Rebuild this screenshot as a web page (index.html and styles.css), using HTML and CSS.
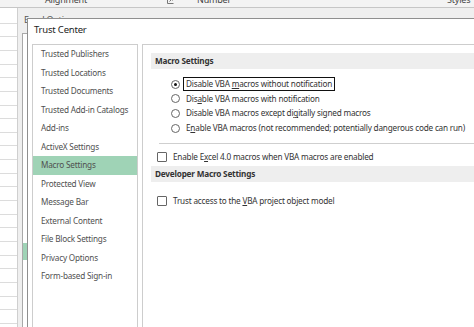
FILE: index.html
```html
<!DOCTYPE html>
<html lang="en">
<head>
    <meta charset="UTF-8">
    <meta name="viewport" content="width=device-width, initial-scale=1.0">
    <title>Trust Center - Macro Settings</title>
    <link rel="icon" href="data:,">
    <link rel="stylesheet" href="styles.css">
</head>
<body>
    <div class="ribbon">
        <span class="group-label label-alignment">Alignment</span>
        <svg class="launcher" width="7" height="7" viewBox="0 0 7 7">
            <path d="M0.5 0.5v6h6" fill="none" stroke="#777" stroke-width="1"/>
            <path d="M2.5 4.5l3-3M3.5 1.5h2v2" fill="none" stroke="#777" stroke-width="1"/>
        </svg>
        <span class="group-label label-number">Number</span>
        <span class="group-label label-styles">Styles</span>
    </div>

    <div class="workspace">
        <!-- Excel Options window, mostly hidden behind Trust Center -->
        <div class="options-window">
            <div class="options-title">Excel Options</div>
            <div class="options-nav">
                <div class="options-selected"></div>
            </div>
        </div>

        <!-- Trust Center window -->
        <div class="trust-window">
            <div class="trust-title">Trust Center</div>
            <div class="trust-body">
                <div class="trust-nav">
                    <div class="nav-item">Trusted Publishers</div>
                    <div class="nav-item">Trusted Locations</div>
                    <div class="nav-item">Trusted Documents</div>
                    <div class="nav-item">Trusted Add-in Catalogs</div>
                    <div class="nav-item">Add-ins</div>
                    <div class="nav-item">ActiveX Settings</div>
                    <div class="nav-item selected">Macro Settings</div>
                    <div class="nav-item">Protected View</div>
                    <div class="nav-item">Message Bar</div>
                    <div class="nav-item">External Content</div>
                    <div class="nav-item">File Block Settings</div>
                    <div class="nav-item">Privacy Options</div>
                    <div class="nav-item">Form-based Sign-in</div>
                </div>

                <div class="trust-panel">
                    <div class="section-header">Macro Settings</div>
                    <div class="radio-list">
                        <div class="option-row">
                            <span class="radio checked"></span>
                            <span class="option-label focused">Disable VBA <u>m</u>acros without notification</span>
                        </div>
                        <div class="option-row">
                            <span class="radio"></span>
                            <span class="option-label">Dis<u>a</u>ble VBA macros with notification</span>
                        </div>
                        <div class="option-row">
                            <span class="radio"></span>
                            <span class="option-label">Disable VBA macros except di<u>g</u>itally signed macros</span>
                        </div>
                        <div class="option-row">
                            <span class="radio"></span>
                            <span class="option-label">E<u>n</u>able VBA macros (not recommended; potentially dangerous code can run)</span>
                        </div>
                    </div>
                    <div class="separator"></div>
                    <div class="option-row check-row">
                        <span class="checkbox"></span>
                        <span class="option-label">Enable E<u>x</u>cel 4.0 macros when VBA macros are enabled</span>
                    </div>
                    <div class="section-header header-dev">Developer Macro Settings</div>
                    <div class="option-row check-row check-dev">
                        <span class="checkbox"></span>
                        <span class="option-label">Trust access to the <u>V</u>BA project object model</span>
                    </div>
                </div>
            </div>
        </div>
    </div>
</body>
</html>
```

FILE: styles.css
```css
body {
    margin: 0;
    width: 474px;
    height: 327px;
    overflow: hidden;
    font-family: "Noto Sans", "Open Sans", sans-serif;
    font-size: 8.2px;
    letter-spacing: -0.2px;
    color: #333;
    background: #fff;
}
.ribbon {
    height: 7px;
    overflow: hidden;
    background: #f3f3f3;
    border-bottom: 1px solid #c6c6c6;
    display: flex;
    align-items: flex-start;
}
.group-label {
    font-size: 9px;
    line-height: 12px;
    margin-top: -6px;
    color: #444;
    white-space: nowrap;
}
.label-alignment {
    margin-left: 45px;
}
.launcher {
    margin-left: 80px;
    margin-top: -3px;
}
.label-number {
    margin-left: 23px;
}
.label-styles {
    margin-left: 216px;
}
.workspace {
    position: relative;
    height: 319px;
    background-color: #fff;
    background-image: repeating-linear-gradient(to bottom, transparent 0, transparent 12.65px, #dcdcdc 12.65px, #dcdcdc 13.65px);
    background-position: 0 2px;
}
.options-window {
    position: absolute;
    left: 17px;
    top: 0;
    width: 470px;
    height: 330px;
    background: #efefef;
    border-left: 1px solid #cfcfcf;
}
.options-title {
    height: 10px;
    overflow: hidden;
    padding: 6px 0 0 6px;
    font-size: 9px;
    line-height: 12px;
    color: #555;
}
.options-nav {
    margin-left: 4px;
    margin-top: 9px;
    width: 150px;
    padding-top: 209px;
    background: #fff;
    border: 1px solid #a9a9a9;
    height: 100px;
}
.options-selected {
    height: 17px;
    background: #9fd3b6;
}
.trust-window {
    position: absolute;
    left: 27px;
    top: 10px;
    width: 460px;
    height: 320px;
    background: #fff;
    border: 1px solid #8f8f8f;
}
.trust-title {
    height: 25px;
    padding-left: 6px;
    line-height: 21px;
    font-size: 9.5px;
    color: #222;
}
.trust-body {
    display: flex;
    gap: 4px;
    padding-left: 4px;
}
.trust-nav {
    width: 104px;
    height: 300px;
    border: 1px solid #cdcdcd;
    flex-shrink: 0;
}
.nav-item {
    height: 18.5px;
    line-height: 18.5px;
    padding-left: 8px;
    color: #505050;
    white-space: nowrap;
}
.nav-item.selected {
    background: #9fd3b6;
}
.trust-panel {
    flex: 1;
    height: 300px;
    border: 1px solid #cdcdcd;
    padding: 8px 0 0 8px;
}
.section-header {
    height: 16px;
    line-height: 16px;
    padding-left: 4px;
    background: #eeeeee;
    font-weight: bold;
    color: #333;
    white-space: nowrap;
}
.radio-list {
    margin-top: 7.7px;
    padding-left: 20px;
}
.option-row {
    height: 14.7px;
    display: flex;
    align-items: center;
    gap: 3px;
    white-space: nowrap;
}
.option-label {
    border: 1px solid transparent;
    padding: 0 2px;
    line-height: 12px;
}
.option-label.focused {
    border-color: #111;
}
.radio {
    width: 7px;
    height: 7px;
    border: 1px solid #666;
    border-radius: 50%;
    position: relative;
    flex-shrink: 0;
}
.radio.checked::after {
    content: "";
    position: absolute;
    left: 2px;
    top: 2px;
    width: 3px;
    height: 3px;
    border-radius: 50%;
    background: #111;
}
.separator {
    margin: 7.5px 0 0 8px;
    height: 1px;
    background: #cfcfcf;
}
.check-row {
    height: 14px;
    margin-top: 6px;
    padding-left: 6px;
}
.checkbox {
    width: 8px;
    height: 8px;
    border: 1px solid #666;
    border-radius: 1px;
    flex-shrink: 0;
}
.header-dev {
    margin-top: 2px;
}
.check-dev {
    margin-top: 12px;
}
```
